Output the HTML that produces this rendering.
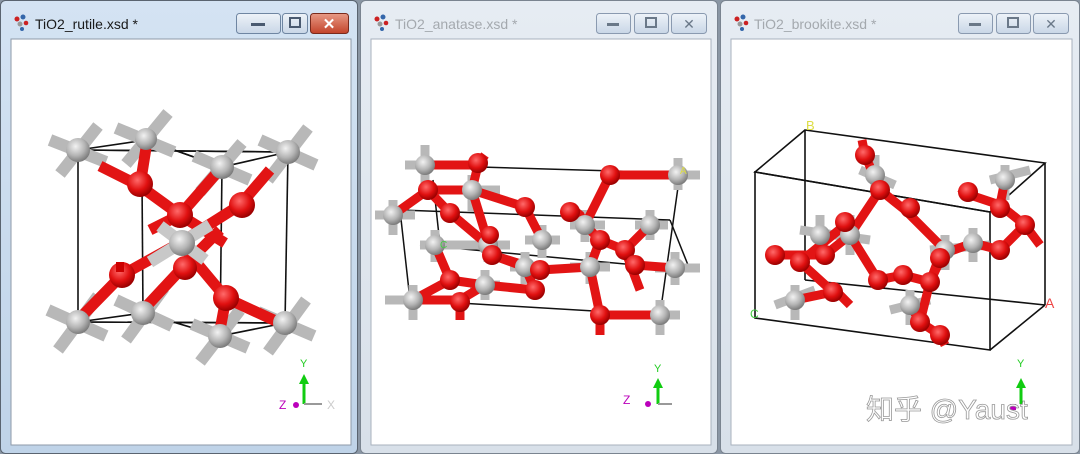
<!DOCTYPE html>
<html><head><meta charset="utf-8"><style>
html,body{margin:0;padding:0;width:1080px;height:454px;overflow:hidden;background:#8a96a4}
svg{display:block}
text{font-family:"Liberation Sans","Noto Sans CJK SC",sans-serif}
</style></head><body>
<svg width="1080" height="454" viewBox="0 0 1080 454" xmlns="http://www.w3.org/2000/svg">
<defs>
<radialGradient id="g" cx="40%" cy="35%" r="65%"><stop offset="0" stop-color="#f2f2f2"/><stop offset="0.6" stop-color="#b4b4b4"/><stop offset="1" stop-color="#7c7c7c"/></radialGradient>
<radialGradient id="r" cx="40%" cy="35%" r="65%"><stop offset="0" stop-color="#ff6a6a"/><stop offset="0.6" stop-color="#e01010"/><stop offset="1" stop-color="#9a0000"/></radialGradient>
<linearGradient id="fa" x1="0" y1="0" x2="0" y2="1"><stop offset="0" stop-color="#d4e3f3"/><stop offset="1" stop-color="#bfd3e8"/></linearGradient>
<linearGradient id="fi" x1="0" y1="0" x2="0" y2="1"><stop offset="0" stop-color="#e6ecf3"/><stop offset="1" stop-color="#d8e0e9"/></linearGradient>
<linearGradient id="btn" x1="0" y1="0" x2="0" y2="1"><stop offset="0" stop-color="#eef3f9"/><stop offset="1" stop-color="#c8d6e6"/></linearGradient>
<linearGradient id="cls" x1="0" y1="0" x2="0" y2="1"><stop offset="0" stop-color="#e89a86"/><stop offset="1" stop-color="#c2432a"/></linearGradient>
</defs>

<rect x="0.5" y="0.5" width="357" height="453" rx="5" fill="url(#fa)" stroke="#5a6470"/>
<rect x="360.5" y="0.5" width="357" height="453" rx="5" fill="url(#fi)" stroke="#7a8490"/>
<rect x="720.5" y="0.5" width="359" height="453" rx="5" fill="url(#fi)" stroke="#7a8490"/>
<rect x="11" y="39" width="340" height="406" fill="#fff" stroke="#8e9aa8"/>
<rect x="371" y="39" width="340" height="406" fill="#fff" stroke="#a8b2bd"/>
<rect x="731" y="39" width="341" height="406" fill="#fff" stroke="#a8b2bd"/>

<g><circle cx="17" cy="19" r="2.5" fill="#c22"/><circle cx="23" cy="17" r="2.5" fill="#36a"/><circle cx="20" cy="24" r="2.5" fill="#999"/><circle cx="26" cy="23" r="2.3" fill="#c22"/><circle cx="22" cy="29" r="2" fill="#36a"/></g>
<g transform="translate(360,0)"><circle cx="17" cy="19" r="2.5" fill="#c22"/><circle cx="23" cy="17" r="2.5" fill="#36a"/><circle cx="20" cy="24" r="2.5" fill="#999"/><circle cx="26" cy="23" r="2.3" fill="#c22"/><circle cx="22" cy="29" r="2" fill="#36a"/></g>
<g transform="translate(720,0)"><circle cx="17" cy="19" r="2.5" fill="#c22"/><circle cx="23" cy="17" r="2.5" fill="#36a"/><circle cx="20" cy="24" r="2.5" fill="#999"/><circle cx="26" cy="23" r="2.3" fill="#c22"/><circle cx="22" cy="29" r="2" fill="#36a"/></g>
<text x="35" y="29" font-size="14" fill="#1a1a1a">TiO2_rutile.xsd *</text>
<text x="395" y="29" font-size="14" fill="#a4a9ae">TiO2_anatase.xsd *</text>
<text x="754" y="29" font-size="14" fill="#a4a9ae">TiO2_brookite.xsd *</text>

<rect x="236.5" y="13.5" width="44" height="20" rx="3" fill="url(#btn)" stroke="#6f86a2"/><rect x="251" y="23" width="14" height="3" fill="#4a5a70"/>
<rect x="282.5" y="13.5" width="25" height="20" rx="3" fill="url(#btn)" stroke="#6f86a2"/><rect x="290" y="18" width="10" height="9" fill="none" stroke="#4a5a70" stroke-width="2"/>
<rect x="310.5" y="13.5" width="38" height="20" rx="3" fill="url(#cls)" stroke="#7a2a1c"/><text x="329" y="29" font-size="15" font-weight="bold" fill="#fff" text-anchor="middle">✕</text>
<g fill="url(#btn)" stroke="#8a9ab0"><rect x="596.5" y="13.5" width="34" height="20" rx="3"/><rect x="634.5" y="13.5" width="34" height="20" rx="3"/><rect x="671.5" y="13.5" width="35" height="20" rx="3"/></g>
<rect x="607" y="23" width="12" height="3" fill="#6a7888"/><rect x="646" y="18" width="10" height="9" fill="none" stroke="#6a7888" stroke-width="2"/><text x="689" y="29" font-size="14" fill="#6a7888" text-anchor="middle">✕</text>
<g fill="url(#btn)" stroke="#8a9ab0"><rect x="958.5" y="13.5" width="34" height="20" rx="3"/><rect x="996.5" y="13.5" width="34" height="20" rx="3"/><rect x="1033.5" y="13.5" width="35" height="20" rx="3"/></g>
<rect x="969" y="23" width="12" height="3" fill="#6a7888"/><rect x="1008" y="18" width="10" height="9" fill="none" stroke="#6a7888" stroke-width="2"/><text x="1051" y="29" font-size="14" fill="#6a7888" text-anchor="middle">✕</text>

<!-- RUTILE -->
<g stroke="#111" stroke-width="1.6" fill="none">
<polygon points="78,150 146,140 222,167 288,152"/>
<line x1="78" y1="150" x2="288" y2="152"/><line x1="146" y1="140" x2="222" y2="167"/>
<polygon points="78,322 143,313 220,336 285,323"/>
<line x1="78" y1="322" x2="285" y2="323"/>
<line x1="78" y1="150" x2="78" y2="322"/><line x1="288" y1="152" x2="285" y2="323"/><line x1="222" y1="167" x2="220" y2="336"/><line x1="142" y1="180" x2="143" y2="313"/>
</g>
<g stroke-width="12" stroke-linecap="butt" fill="none">
<g stroke="#b8b8b8">
<path d="M50,140 L106,162 M60,174 L98,126"/><path d="M116,128 L174,152 M126,164 L168,113"/><path d="M194,156 L250,180 M200,192 L242,143"/><path d="M260,140 L316,165 M268,180 L308,128"/>
<path d="M48,310 L106,336 M58,350 L98,296"/><path d="M116,300 L172,326 M126,340 L164,288"/><path d="M192,324 L248,348 M200,362 L240,310"/><path d="M258,312 L314,336 M268,352 L306,300"/>
</g>
<g stroke="#e21414" stroke-width="11">
<path d="M100,166 L140,186 L180,215 L225,243"/><path d="M146,148 L140,186"/><path d="M222,167 L180,215 L150,230"/><path d="M270,170 L240,205 L180,243"/>
<path d="M80,318 L122,275 L180,243"/><path d="M143,310 L185,265 L220,230"/><path d="M180,243 L226,298 L278,322"/><path d="M226,298 L220,330"/>
</g>
<g stroke="#c8c8c8"><path d="M150,262 L210,225 M160,226 L205,260"/></g>
</g>
<g fill="url(#g)">
<circle cx="78" cy="150" r="12"/><circle cx="146" cy="139" r="11"/><circle cx="222" cy="167" r="12"/><circle cx="288" cy="152" r="12"/>
<circle cx="78" cy="322" r="12"/><circle cx="143" cy="313" r="12"/><circle cx="220" cy="336" r="12"/><circle cx="285" cy="323" r="12"/><circle cx="182" cy="243" r="13"/>
</g>
<g fill="url(#r)">
<circle cx="140" cy="184" r="13"/><circle cx="180" cy="215" r="13"/><circle cx="242" cy="205" r="13"/><circle cx="122" cy="275" r="13"/><circle cx="185" cy="268" r="12"/><circle cx="226" cy="298" r="13"/>
</g>
<rect x="116" y="262" width="8" height="10" fill="#c00"/>
<text x="300" y="367" font-size="11" fill="#2c2">Y</text>
<line x1="304" y1="404" x2="304" y2="382" stroke="#1c1" stroke-width="3"/><polygon points="299,384 304,374 309,384" fill="#1c1"/>
<line x1="304" y1="404" x2="322" y2="404" stroke="#999" stroke-width="2"/><text x="327" y="409" font-size="12" fill="#ccc">X</text>
<circle cx="296" cy="405" r="3" fill="#b0b"/><text x="279" y="409" font-size="12" fill="#b0b">Z</text>

<!-- ANATASE -->
<g stroke="#111" stroke-width="1.5" fill="none">
<line x1="413" y1="165" x2="680" y2="173"/><line x1="400" y1="210" x2="670" y2="220"/><line x1="410" y1="300" x2="660" y2="315"/><line x1="420" y1="245" x2="690" y2="270"/>
<line x1="400" y1="210" x2="410" y2="300"/><line x1="680" y1="173" x2="660" y2="315"/><line x1="433" y1="180" x2="440" y2="245"/><line x1="670" y1="220" x2="690" y2="270"/>
</g>
<g stroke-width="9" fill="none">
<g stroke="#b8b8b8">
<path d="M405,165 L455,165 M425,145 L425,185 M375,215 L415,215 M393,200 L393,235 M460,190 L500,190 M472,175 L472,212 M420,245 L510,245 M435,230 L435,262 M488,228 L488,262 M525,240 L560,240 M542,225 L542,258 M570,225 L605,225 M585,210 L585,242 M635,225 L668,225 M650,210 L650,240 M662,175 L700,175 M678,158 L678,190 M385,300 L440,300 M413,285 L413,320 M470,285 L500,285 M485,270 L485,300 M510,267 L545,267 M525,252 L525,284 M570,267 L610,267 M590,252 L590,284 M655,268 L700,268 M675,252 L675,285 M640,315 L680,315 M660,300 L660,335"/>
</g>
<g stroke="#e21414">
<path d="M425,165 L478,165 L472,190 L428,190 L393,215 M478,165 L485,155 M472,190 L525,207 L542,240 M472,190 L492,255 L485,245 M450,213 L428,190 M450,213 L488,245 M435,245 L450,280 L413,300 M450,280 L485,285 L460,300 L413,300 M485,245 L492,255 L540,270 M492,255 L525,267 L535,290 L485,285 M540,270 L590,267 L600,240 L585,225 L580,215 L570,207 M610,175 L678,175 M610,175 L585,225 M600,240 L625,250 L650,225 M625,250 L635,265 L675,268 M590,267 L600,315 L660,315 M600,315 L600,335 M535,290 L525,267 M460,300 L460,320 M625,250 L640,290"/>
</g>
</g>
<g fill="url(#g)">
<circle cx="425" cy="165" r="10"/><circle cx="472" cy="190" r="10"/><circle cx="393" cy="215" r="10"/><circle cx="435" cy="245" r="10"/><circle cx="488" cy="245" r="10"/><circle cx="542" cy="240" r="10"/><circle cx="585" cy="225" r="10"/><circle cx="650" cy="225" r="10"/><circle cx="678" cy="175" r="10"/><circle cx="413" cy="300" r="10"/><circle cx="485" cy="285" r="10"/><circle cx="525" cy="267" r="10"/><circle cx="590" cy="267" r="10"/><circle cx="675" cy="268" r="10"/><circle cx="660" cy="315" r="10"/>
</g>
<g fill="url(#r)">
<circle cx="478" cy="163" r="10"/><circle cx="428" cy="190" r="10"/><circle cx="450" cy="213" r="10"/><circle cx="525" cy="207" r="10"/><circle cx="492" cy="255" r="10"/><circle cx="450" cy="280" r="10"/><circle cx="540" cy="270" r="10"/><circle cx="610" cy="175" r="10"/><circle cx="570" cy="212" r="10"/><circle cx="600" cy="240" r="10"/><circle cx="625" cy="250" r="10"/><circle cx="635" cy="265" r="10"/><circle cx="460" cy="302" r="10"/><circle cx="535" cy="290" r="10"/><circle cx="600" cy="315" r="10"/><circle cx="490" cy="235" r="9"/>
</g>
<text x="680" y="174" font-size="10" fill="#dd4">A</text><text x="440" y="248" font-size="10" fill="#4c4">C</text>
<text x="654" y="372" font-size="11" fill="#2c2">Y</text>
<line x1="658" y1="404" x2="658" y2="386" stroke="#1c1" stroke-width="3"/><polygon points="653,388 658,378 663,388" fill="#1c1"/>
<line x1="658" y1="404" x2="672" y2="404" stroke="#999" stroke-width="2"/>
<circle cx="648" cy="404" r="3" fill="#b0b"/><text x="623" y="404" font-size="12" fill="#b0b">Z</text>

<!-- BROOKITE -->
<g stroke="#111" stroke-width="1.6" fill="none">
<polygon points="805,130 1045,163 990,212 755,172"/>
<polygon points="755,172 990,212 990,350 755,318"/>
<line x1="1045" y1="163" x2="1045" y2="305"/><line x1="1045" y1="305" x2="990" y2="350"/>
<line x1="805" y1="130" x2="805" y2="280"/><line x1="805" y1="280" x2="1045" y2="305"/>
</g>
<g stroke-width="9" fill="none">
<g stroke="#b8b8b8"><path d="M860,170 L895,185 M875,155 L875,195 M990,180 L1030,170 M1005,165 L1005,200 M800,230 L870,240 M820,215 L820,255 M850,215 L850,255 M930,250 L990,245 M945,235 L945,270 M973,228 L973,262 M775,305 L815,290 M795,285 L795,320 M890,310 L930,300 M910,290 L910,325"/></g>
<g stroke="#e21414"><path d="M862,140 L865,155 L880,190 L905,210 L945,250 M880,190 L850,235 L825,255 L775,255 M845,225 L800,262 L833,292 L795,300 M850,235 L878,280 L903,275 L930,282 L920,322 L940,335 L945,345 M930,282 L945,250 M960,188 L970,195 L1000,205 L1025,225 L1040,245 M1000,205 L1005,180 M1025,225 L1000,250 L973,243 M973,243 L940,255 L930,282 M910,305 L920,322 M835,290 L850,305"/></g>
</g>
<g fill="url(#g)">
<circle cx="875" cy="175" r="10"/><circle cx="1005" cy="180" r="10"/><circle cx="820" cy="235" r="10"/><circle cx="850" cy="235" r="10"/><circle cx="945" cy="250" r="10"/><circle cx="973" cy="243" r="10"/><circle cx="795" cy="300" r="10"/><circle cx="910" cy="305" r="10"/>
</g>
<g fill="url(#r)">
<circle cx="865" cy="155" r="10"/><circle cx="880" cy="190" r="10"/><circle cx="910" cy="208" r="10"/><circle cx="845" cy="222" r="10"/><circle cx="825" cy="255" r="10"/><circle cx="775" cy="255" r="10"/><circle cx="800" cy="262" r="10"/><circle cx="930" cy="282" r="10"/><circle cx="920" cy="322" r="10"/><circle cx="940" cy="335" r="10"/><circle cx="968" cy="192" r="10"/><circle cx="1000" cy="208" r="10"/><circle cx="1025" cy="225" r="10"/><circle cx="1000" cy="250" r="10"/><circle cx="940" cy="258" r="10"/><circle cx="878" cy="280" r="10"/><circle cx="833" cy="292" r="10"/><circle cx="903" cy="275" r="10"/>
</g>
<text x="806" y="130" font-size="13" fill="#dd4">B</text><text x="1045" y="308" font-size="14" fill="#e44">A</text><text x="750" y="318" font-size="12" fill="#4c4">C</text>
<text x="1017" y="367" font-size="11" fill="#2c2">Y</text>
<line x1="1021" y1="404" x2="1021" y2="386" stroke="#1c1" stroke-width="3"/><polygon points="1016,388 1021,378 1026,388" fill="#1c1"/>
<rect x="1010" y="404" width="6" height="6" fill="#b0b"/>
<text x="866" y="419" font-size="28" fill="#fff" stroke="#999" stroke-width="0.8">知乎 @Yaust</text>
</svg>
</body></html>
